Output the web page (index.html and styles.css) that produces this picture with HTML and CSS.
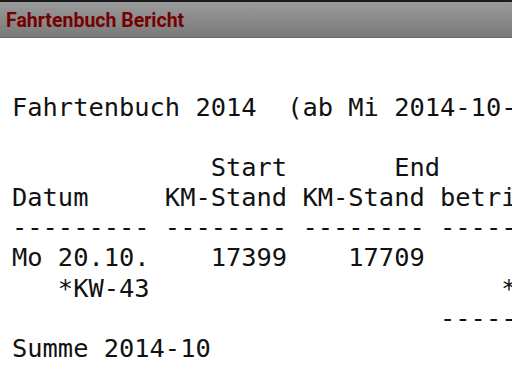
FILE: index.html
```html
<!DOCTYPE html>
<html lang="de">
<head>
	<meta charset="UTF-8">
	<title>Fahrtenbuch Bericht</title>
	<link rel="stylesheet" href="styles.css">
</head>
<body>
	<div id="titlebar">Fahrtenbuch Bericht</div>
	<pre id="report">
Fahrtenbuch 2014  (ab Mi 2014-10-01)

             Start       End
Datum     KM-Stand KM-Stand betrieblich
--------- -------- -------- ----------
Mo 20.10.    17399    17709
   *KW-43                       *
                            ----------
Summe 2014-10</pre>
</body>
</html>
```

FILE: styles.css
```css
* {
	margin: 0;
	padding: 0;
}
html, body {
	width: 512px;
	height: 386px;
	overflow: hidden;
	background: #fff;
}
#titlebar {
	height: 35px;
	line-height: 37px;
	padding-left: 6px;
	border-top: 2px solid #1a1a1a;
	border-bottom: 1px solid #6a6a6a;
	background: linear-gradient(#9a9a9a, #7a7a7a);
	color: #760000;
	font-family: Roboto, "Liberation Sans", sans-serif;
	font-weight: bold;
	font-size: 19.5px;
}
#report {
	padding: 54px 0 0 12px;
	font-family: "DejaVu Sans Mono", "Liberation Mono", monospace;
	font-size: 25.4px;
	line-height: 30.1px;
	color: #111;
	white-space: pre;
	overflow: hidden;
}
```
